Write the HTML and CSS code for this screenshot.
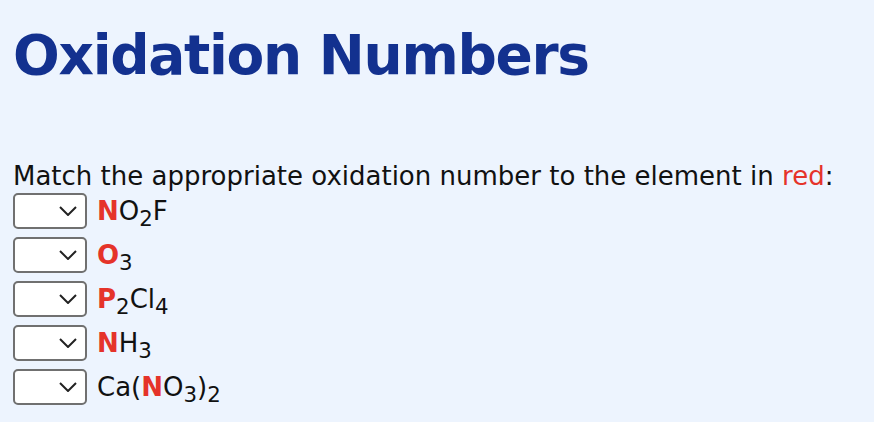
FILE: index.html
```html
<!DOCTYPE html>
<html lang="en">
<head>
  <meta charset="UTF-8" />
  <title>Oxidation Numbers</title>
  <link rel="stylesheet" href="styles.css">
</head>
<body>
  <h1>Oxidation Numbers</h1>

  <p class="prompt">Match the appropriate oxidation number to the element in <span class="hl">red</span>:</p>

  <div class="quiz">
    <div class="row">
      <select class="pick"><option></option><option>-3</option><option>-2</option><option>+2</option><option>+3</option><option>+5</option></select>
      <span class="formula"><b class="hl">N</b>O<sub>2</sub>F</span>
    </div>
    <div class="row">
      <select class="pick"><option></option><option>0</option><option>-2</option><option>+2</option></select>
      <span class="formula"><b class="hl">O</b><sub>3</sub></span>
    </div>
    <div class="row">
      <select class="pick"><option></option><option>+2</option><option>+3</option><option>-2</option></select>
      <span class="formula"><b class="hl">P</b><sub>2</sub>Cl<sub>4</sub></span>
    </div>
    <div class="row">
      <select class="pick"><option></option><option>-3</option><option>+3</option><option>+5</option></select>
      <span class="formula"><b class="hl">N</b>H<sub>3</sub></span>
    </div>
    <div class="row">
      <select class="pick"><option></option><option>+5</option><option>+3</option><option>-3</option></select>
      <span class="formula">Ca(<b class="hl">N</b>O<sub>3</sub>)<sub>2</sub></span>
    </div>
  </div>
</body>
</html>
```

FILE: styles.css
```css
body {
  margin: 0;
  padding: 0 13px;
  background-color: #edf4fe;
  color: #111;
  font-family: "DejaVu Sans", Verdana, sans-serif;
}

h1 {
  margin: 23px 0 0 0;
  font-size: 55px;
  line-height: 64px;
  font-weight: bold;
  letter-spacing: -1.3px;
  color: #13318f;
}

.prompt {
  margin: 73px 0 0 0;
  font-size: 26px;
  line-height: 32px;
}

.hl {
  color: #e5332a;
}

.quiz {
  display: flex;
  flex-direction: column;
  gap: 8px;
  margin-top: 1px;
}

.row {
  display: flex;
  align-items: center;
  gap: 10px;
  height: 36px;
}

/* plain select box with a thin chevron drawn by hand */
.pick {
  appearance: none;
  width: 74px;
  height: 36px;
  border: 2px solid #707070;
  border-radius: 5px;
  background-color: #fff;
  background-image: url("data:image/svg+xml,%3Csvg xmlns='http://www.w3.org/2000/svg' width='18' height='10' viewBox='0 0 18 10'%3E%3Cpath d='M1 1l8 8 8-8' fill='none' stroke='%23222' stroke-width='2'/%3E%3C/svg%3E");
  background-repeat: no-repeat;
  background-position: right 8px center;
  font-family: inherit;
  font-size: 18px;
}

.formula {
  font-size: 26px;
}

.formula b {
  font-weight: bold;
}

.formula sub {
  font-size: 0.82em;
  vertical-align: -0.3em;
  line-height: 0;
}
```
